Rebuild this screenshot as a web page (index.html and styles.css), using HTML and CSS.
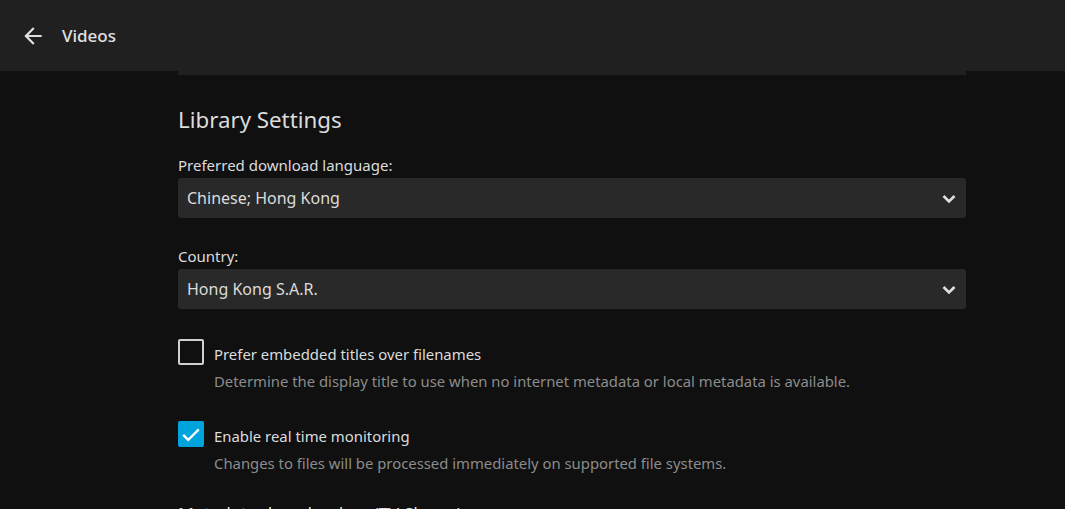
FILE: index.html
```html
<!DOCTYPE html>
<html lang="en">
<head>
<meta charset="utf-8">
<title>Videos</title>
<link rel="stylesheet" href="styles.css">
</head>
<body>
<header class="app-header">
  <button class="back-btn" aria-label="Back">
    <svg class="back-icon" viewBox="0 0 24 24" width="26" height="26"><path d="M20 11H7.83l5.59-5.59L12 4l-8 8 8 8 1.41-1.41L7.83 13H20v-2z" fill="#e0e0e0"/></svg>
  </button>
  <h1 class="page-title">Videos</h1>
</header>
<main class="content">
  <div class="prev-strip"></div>
  <h2 class="section-title">Library Settings</h2>

  <div class="field">
    <label class="field-label">Preferred download language:</label>
    <div class="select">
      <span class="select-value">Chinese; Hong Kong</span>
      <svg class="chevron" viewBox="0 0 14 10" width="14" height="10"><polyline points="1.5,2 7,7.5 12.5,2" fill="none" stroke="#e0e0e0" stroke-width="2.6"/></svg>
    </div>
  </div>

  <div class="field field-second">
    <label class="field-label">Country:</label>
    <div class="select">
      <span class="select-value">Hong Kong S.A.R.</span>
      <svg class="chevron" viewBox="0 0 14 10" width="14" height="10"><polyline points="1.5,2 7,7.5 12.5,2" fill="none" stroke="#e0e0e0" stroke-width="2.6"/></svg>
    </div>
  </div>

  <div class="check-row first-check">
    <span class="checkbox"></span>
    <div class="check-text">
      <div class="check-label">Prefer embedded titles over filenames</div>
      <div class="check-desc">Determine the display title to use when no internet metadata or local metadata is available.</div>
    </div>
  </div>

  <div class="check-row">
    <span class="checkbox checked">
      <svg viewBox="0 0 24 24" width="24" height="24"><path d="M9 16.6L4.4 12l-1.8 1.8L9 20.2 21.4 7.8 19.6 6z" fill="#ffffff"/></svg>
    </span>
    <div class="check-text">
      <div class="check-label">Enable real time monitoring</div>
      <div class="check-desc">Changes to files will be processed immediately on supported file systems.</div>
    </div>
  </div>

  <h3 class="sub-title">Metadata downloaders (TV Shows):</h3>
</main>
</body>
</html>
```

FILE: styles.css
```css
html, body {
  margin: 0;
  padding: 0;
  background: #101010;
  color: #dcdcdc;
  font-family: "Noto Sans", "Open Sans", sans-serif;
  height: 509px;
  overflow: hidden;
}

.app-header {
  height: 71px;
  background: #202020;
  display: flex;
  align-items: center;
}

.back-btn {
  background: none;
  border: 0;
  padding: 0;
  margin-left: 20px;
  width: 26px;
  height: 26px;
  display: flex;
  cursor: pointer;
}

.page-title {
  margin: 0 0 0 16px;
  font-size: 17px;
  font-weight: 500;
  color: #e0e0e0;
  line-height: 24px;
}

.content {
  margin-left: 178px;
  width: 788px;
}

.prev-strip {
  height: 4px;
  background: #202020;
}

.section-title {
  margin: 30px 0 20px;
  font-size: 22.3px;
  line-height: 30px;
  font-weight: 400;
  color: #dcdcdc;
}

.field-label {
  display: block;
  font-size: 15px;
  line-height: 20px;
  margin-bottom: 3px;
  color: #dcdcdc;
}

.field-second {
  margin-top: 28px;
}

.select {
  height: 40px;
  background: #292929;
  border-radius: 3px;
  display: flex;
  align-items: center;
  justify-content: space-between;
  padding: 0 10px 0 9px;
}

.select-value {
  font-size: 16px;
  line-height: 40px;
  color: #dcdcdc;
}

.chevron {
  display: block;
  margin-top: 1px;
}

.check-row {
  display: flex;
  align-items: flex-start;
  margin-top: 30px;
}

.checkbox {
  width: 26px;
  height: 26px;
  box-sizing: border-box;
  border: 2px solid #d0d0d0;
  border-radius: 2px;
  flex-shrink: 0;
  display: flex;
  align-items: center;
  justify-content: center;
}

.checkbox.checked {
  background: #00a4dc;
  border-color: #00a4dc;
}

.check-text {
  margin-left: 10px;
}

.check-label {
  font-size: 14.9px;
  line-height: 30px;
  color: #dcdcdc;
}

.check-desc {
  margin-top: 2px;
  font-size: 14.85px;
  line-height: 20px;
  color: #8c8c8c;
}

.sub-title {
  margin: 29px 0 0;
  font-size: 17.6px;
  line-height: 24px;
  font-weight: 400;
  color: #dcdcdc;
}
```
